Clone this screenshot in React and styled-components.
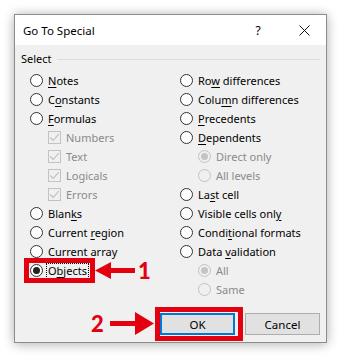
import React from "react";
import styled, { createGlobalStyle } from "styled-components";

const Global = createGlobalStyle`
  html, body { margin: 0; padding: 0; background: #ffffff; }
  body { font-family: "Noto Sans", "Open Sans", sans-serif; font-size: 11px; color: #000; }
  * { box-sizing: border-box; }
`;

const Page = styled.div`
  position: relative;
  width: 343px;
  height: 358px;
  padding: 14px 0 0 14px;
`;

const Dialog = styled.div`
  width: 313px;
  height: 329px;
  border: 1px solid #8c8c8c;
  background: #f0f0f0;
  box-shadow: 0 0 10px rgba(0, 0, 0, 0.22), 0 3px 12px rgba(0, 0, 0, 0.12);
  display: flex;
  flex-direction: column;
`;

const TitleBar = styled.div`
  height: 30px;
  background: #ffffff;
  display: flex;
  align-items: center;
  padding-left: 8px;
`;

const Title = styled.div`
  font-size: 11.5px;
  flex: 1;
`;

const CaptionButton = styled.div`
  width: ${(p) => p.$w}px;
  height: 30px;
  display: flex;
  align-items: center;
  justify-content: center;
  font-size: 12px;
`;

const Body = styled.div`
  flex: 1;
  display: flex;
  flex-direction: column;
  padding: 7px 6px 7px 6px;
`;

const GroupHeader = styled.div`
  display: flex;
  align-items: center;
  gap: 5px;
  height: 14px;
`;

const GroupLine = styled.div`
  flex: 1;
  height: 1px;
  background: #dcdcdc;
`;

const Columns = styled.div`
  display: grid;
  grid-template-columns: 150px 1fr;
  margin-top: 5px;
  padding-left: 9px;
`;

const Column = styled.div`
  display: flex;
  flex-direction: column;
`;

const Row = styled.div`
  display: flex;
  align-items: center;
  height: 19px;
  gap: 5px;
  padding-left: ${(p) => p.$indent || 0}px;
  color: ${(p) => (p.$disabled ? "#8a8a8a" : "#000")};
`;

const Circle = styled.span`
  width: 13px;
  height: 13px;
  border-radius: 50%;
  border: 1px solid ${(p) => (p.$disabled ? "#c2c2c2" : "#333333")};
  background: ${(p) => (p.$disabled ? "#f0f0f0" : "#ffffff")};
  display: flex;
  align-items: center;
  justify-content: center;
  flex: none;
  &::after {
    content: "";
    display: ${(p) => (p.$checked ? "block" : "none")};
    width: 7px;
    height: 7px;
    border-radius: 50%;
    background: ${(p) => (p.$disabled ? "#c4c4c4" : "#222222")};
  }
`;

const Box = styled.span`
  width: 13px;
  height: 13px;
  border: 1px solid #c2c2c2;
  background: #f0f0f0;
  display: flex;
  align-items: center;
  justify-content: center;
  flex: none;
`;

const Label = styled.span`
  line-height: 14px;
  white-space: nowrap;
  ${(p) =>
    p.$focus &&
    `outline: 1px dotted #000; outline-offset: 0px; padding: 0 1px; margin-left: -1px;`}
  u { text-decoration: underline; text-underline-offset: 2px; }
`;

const ButtonRow = styled.div`
  margin-top: auto;
  display: flex;
  justify-content: flex-end;
  gap: 10px;
`;

const Button = styled.div`
  width: 75px;
  height: 22px;
  background: #e1e1e1;
  border: ${(p) => (p.$default ? "2px solid #0078d7" : "1px solid #adadad")};
  display: flex;
  align-items: center;
  justify-content: center;
  font-size: 11.5px;
`;

const RedFrame = styled.div`
  position: absolute;
  left: ${(p) => p.$x}px;
  top: ${(p) => p.$y}px;
  width: ${(p) => p.$w}px;
  height: ${(p) => p.$h}px;
  border: 5px solid #e3000f;
`;

const Marker = styled.div`
  position: absolute;
  left: ${(p) => p.$x}px;
  top: ${(p) => p.$y}px;
  color: #e3000f;
  font-family: Lato, "Open Sans", sans-serif;
  font-weight: 900;
  font-size: 22px;
  line-height: 20px;
`;

const ArrowSvg = styled.svg`
  position: absolute;
  left: ${(p) => p.$x}px;
  top: ${(p) => p.$y}px;
`;

const Radio = ({ checked, disabled, indent, focus, children }) => (
  <Row $indent={indent} $disabled={disabled}>
    <Circle $checked={checked} $disabled={disabled} />
    <Label $focus={focus}>{children}</Label>
  </Row>
);

const Check = ({ children }) => (
  <Row $indent={18} $disabled>
    <Box>
      <svg width="11" height="11" viewBox="0 0 11 11">
        <path d="M1.2 5.5 L4.2 8.5 L9.8 2.2" fill="none" stroke="#bdbdbd" strokeWidth="1.1" />
      </svg>
    </Box>
    <Label>{children}</Label>
  </Row>
);

export default function App() {
  return (
    <Page>
      <Global />
      <Dialog>
        <TitleBar>
          <Title>Go To Special</Title>
          <CaptionButton $w={48}>?</CaptionButton>
          <CaptionButton $w={44}>
            <svg width="11" height="11" viewBox="0 0 11 11">
              <path d="M0.5 0.5 L10.5 10.5 M10.5 0.5 L0.5 10.5" stroke="#111" strokeWidth="1" />
            </svg>
          </CaptionButton>
        </TitleBar>
        <Body>
          <GroupHeader>
            <Label>Select</Label>
            <GroupLine />
          </GroupHeader>
          <Columns>
            <Column>
              <Radio><u>N</u>otes</Radio>
              <Radio>C<u>o</u>nstants</Radio>
              <Radio><u>F</u>ormulas</Radio>
              <Check>Numbers</Check>
              <Check>Text</Check>
              <Check>Logicals</Check>
              <Check>Errors</Check>
              <Radio>Blan<u>k</u>s</Radio>
              <Radio>Current <u>r</u>egion</Radio>
              <Radio>Current array</Radio>
              <Radio checked focus>O<u>b</u>jects</Radio>
            </Column>
            <Column>
              <Radio>Ro<u>w</u> differences</Radio>
              <Radio>Colu<u>m</u>n differences</Radio>
              <Radio><u>P</u>recedents</Radio>
              <Radio><u>D</u>ependents</Radio>
              <Radio indent={18} disabled checked>Direct only</Radio>
              <Radio indent={18} disabled>All levels</Radio>
              <Radio>La<u>s</u>t cell</Radio>
              <Radio>Visible cells onl<u>y</u></Radio>
              <Radio>Condi<u>t</u>ional formats</Radio>
              <Radio>Data <u>v</u>alidation</Radio>
              <Radio indent={18} disabled checked>All</Radio>
              <Radio indent={18} disabled>Same</Radio>
            </Column>
          </Columns>
          <ButtonRow>
            <Button $default>OK</Button>
            <Button>Cancel</Button>
          </ButtonRow>
        </Body>
      </Dialog>

      <RedFrame $x={24} $y={258} $w={71} $h={25} />
      <ArrowSvg $x={95} $y={261} width="42" height="19" viewBox="0 0 42 19">
        <polygon points="0,9.5 16,1 16,18" fill="#e3000f" />
        <rect x="15" y="7" width="25" height="5" fill="#e3000f" />
      </ArrowSvg>
      <Marker $x={138} $y={261}>1</Marker>

      <RedFrame $x={155} $y={307} $w={88} $h={34} />
      <Marker $x={91} $y={314}>2</Marker>
      <ArrowSvg $x={110} $y={312} width="45" height="23" viewBox="0 0 45 23">
        <rect x="0" y="9" width="27" height="5" fill="#e3000f" />
        <polygon points="25,0 44,11.5 25,23" fill="#e3000f" />
      </ArrowSvg>
    </Page>
  );
}
